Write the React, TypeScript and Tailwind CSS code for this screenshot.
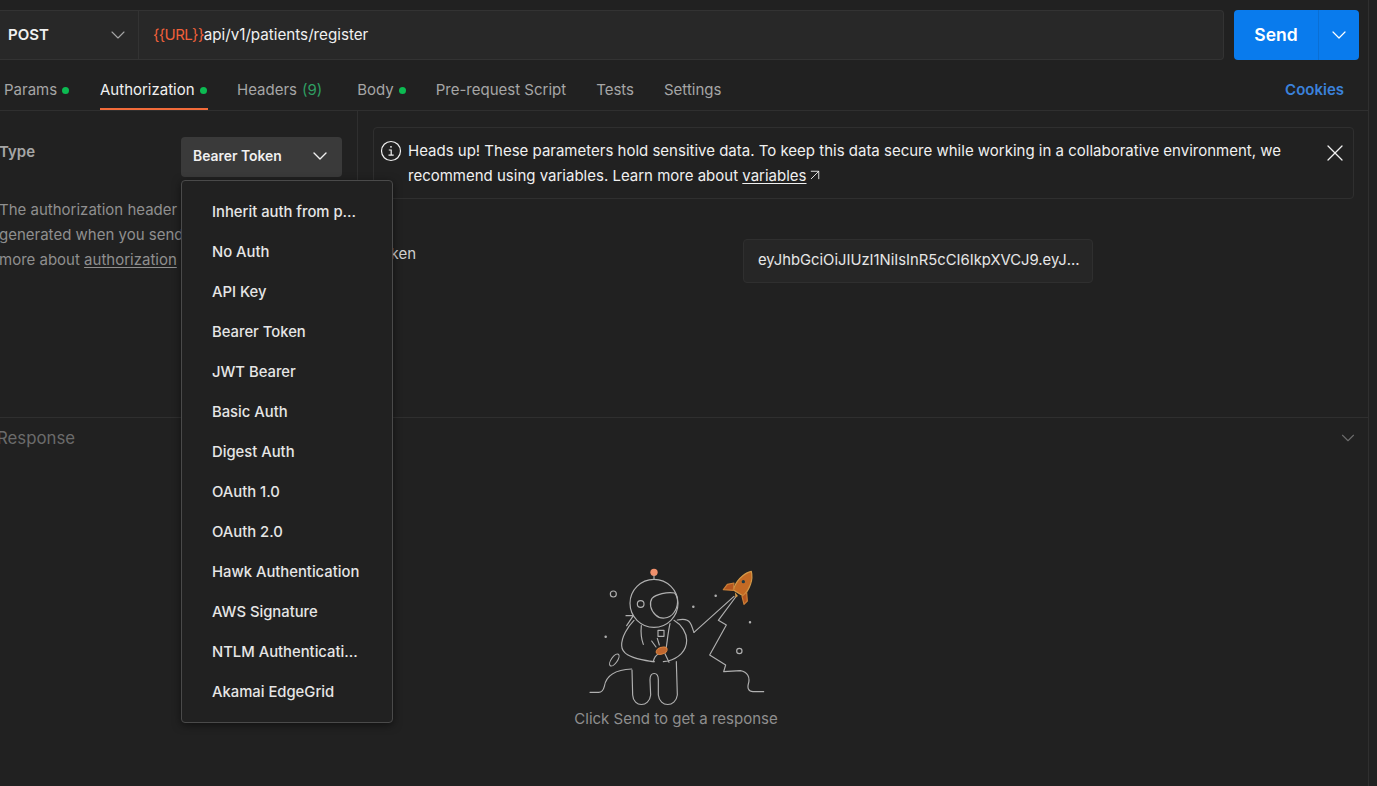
import { ChevronDown, X, ArrowUpRight } from "lucide-react";

const authTypes = [
  "Inherit auth from p...",
  "No Auth",
  "API Key",
  "Bearer Token",
  "JWT Bearer",
  "Basic Auth",
  "Digest Auth",
  "OAuth 1.0",
  "OAuth 2.0",
  "Hawk Authentication",
  "AWS Signature",
  "NTLM Authenticati...",
  "Akamai EdgeGrid",
];

function Dot() {
  return <span className="ml-[5px] h-[7px] w-[7px] rounded-full bg-[#0cbb52]" />;
}

function Tab({ label, dot, active, className }: { label: string; dot?: boolean; active?: boolean; className: string }) {
  return (
    <div className={`flex h-full items-center pt-[12px] ${active ? "border-b-2 border-[#f26b3a] text-[#f0f0f0]" : "border-b-2 border-transparent text-[#a6a6a6]"} ${className}`}>
      {label}
      {dot && <Dot />}
    </div>
  );
}

function InfoIcon() {
  return (
    <svg width="22" height="22" viewBox="0 0 22 22" fill="none" stroke="currentColor" strokeWidth="1.2" className="mt-[2px] shrink-0">
      <circle cx="11" cy="11" r="9.5" />
      <circle cx="11" cy="6.8" r="0.9" fill="currentColor" stroke="none" />
      <path d="M8.8 10h2.4v5.2M8.5 15.2h5.2" />
    </svg>
  );
}

function Astronaut() {
  return (
    <svg width="210" height="155" viewBox="0 0 630 465" fill="none" stroke="#b0b0b0" strokeWidth="3.5" strokeLinecap="round" strokeLinejoin="round" className="block">
      <circle cx="252" cy="52" r="11" fill="#f0906c" stroke="none" />
      <path d="M252 62v10" />
      <circle cx="252" cy="145" r="72" />
      <path d="M246 130c12-12 45-20 68-16 12 14 12 40-3 60-14 18-40 20-54 6-16-14-20-36-11-50z" />
      <circle cx="212" cy="147" r="10" />
      <circle cx="130" cy="117" r="9" />
      <circle cx="508" cy="288" r="8" />
      <path d="M192 196c-18 18-38 50-37 76 1 24 26 34 60 42 14 3 28 6 38 6" />
      <path d="M168 182h22M190 182l-20 30" />
      <path d="M312 196c24 14 38 38 38 60 0 32-24 54-56 62l-14 2" />
      <path d="M322 195c18-4 32-2 38 8 6 8 8 20 12 29" />
      <path d="M214 212c-2 20 0 40 6 56M300 206c-6 26-8 52-12 76" />
      <rect x="264" y="226" width="18" height="18" />
      <path d="M245 258l13 18M262 250l6 20" />
      <path d="M285 296l12 26M250 320c2-12 8-20 16-24" />
      <path d="M186 345l2 75c2 38 50 38 54 0l-2-45c0-26 25-26 25 0v45c4 38 52 38 57 0l-3-100" />
      <path d="M60 412h26c10 0 14-6 17-18 5-30 28-50 82-52" />
      <ellipse cx="133" cy="315" rx="9" ry="21" transform="rotate(35 133 315)" />
      <path d="M372 232l120-108" />
      <path d="M497 126l-52 70 24 14-50 90 48 30-6 20 50-3c22 4 30 20 24 40-3 12 0 23 14 23h32" />
      <circle cx="437" cy="122" r="2" fill="#b0b0b0" />
      <circle cx="370" cy="155" r="2" fill="#b0b0b0" />
      <circle cx="540" cy="202" r="2" fill="#b0b0b0" />
      <circle cx="107" cy="245" r="2" fill="#b0b0b0" />
      <ellipse cx="275" cy="287" rx="17" ry="10" transform="rotate(-20 275 287)" fill="#c0672f" stroke="#d9823f" />
      <path d="M490 105c6-24 28-50 54-56 6 24-4 54-24 74z" fill="#c46a24" stroke="#d49a4a" />
      <path d="M492 84l-20 4-12 16 30 2z" fill="#b5561f" stroke="#cc8038" />
      <path d="M530 112l2 26-10 10-6-24z" fill="#b5561f" stroke="#cc8038" />
      <path d="M495 112l9 11-8 5z" fill="#d49a4a" stroke="none" />
      <circle cx="520" cy="80" r="5" fill="#1f3a44" stroke="none" />
    </svg>
  );
}

export default function App() {
  return (
    <div className="relative h-[786px] w-[1377px] overflow-hidden bg-[#212121] font-['Inter',sans-serif] text-[15px]">
      <div className="flex h-full w-[1369px] flex-col border-r border-[#2f2f2f]">
        {/* request bar */}
        <div className="flex h-[60px] gap-[10px] pt-[10px] pr-[9px]">
          <div className="flex flex-1 rounded-r-[4px] border-y border-r border-[#333333] bg-[#282828]">
            <div className="flex w-[139px] items-center justify-between border-r border-[#333333] pl-[8px] pr-[8px]">
              <span className="pt-[1px] font-semibold text-[#f0f0f0]">POST</span>
              <ChevronDown size={24} className="text-[#a6a6a6]" strokeWidth={1.1} />
            </div>
            <div className="flex items-center pl-[14px] text-[15.2px] text-[#f0f0f0]">
              <span className="text-[15px] tracking-[-0.6px] text-[#f0603a]">{"{{URL}}"}</span>
              api/v1/patients/register
            </div>
          </div>
          <div className="flex w-[125px] rounded-[4px] bg-[#097bed] text-white">
            <div className="flex w-[84px] items-center justify-center text-[17.5px] font-semibold">Send</div>
            <div className="flex flex-1 items-center justify-center border-l border-[#0a6fd4]">
              <ChevronDown size={24} strokeWidth={1.2} />
            </div>
          </div>
        </div>

        {/* tabs */}
        <div className="flex h-[51px] items-center justify-between border-b border-[#2f2f2f] pl-[4px] pr-[24px]">
          <div className="flex h-full">
            <Tab label="Params" dot className="w-[96px]" />
            <Tab label="Authorization" dot active className="w-[108px]" />
            <div className="ml-[29px] flex items-center border-b-2 border-transparent pt-[12px] text-[#a6a6a6]">
              Headers <span className="ml-[5px] text-[#2f9e62]">(9)</span>
            </div>
            <Tab label="Body" dot className="ml-[35px]" />
            <Tab label="Pre-request Script" className="ml-[30px]" />
            <Tab label="Tests" className="ml-[30px]" />
            <Tab label="Settings" className="ml-[30px]" />
          </div>
          <span className="pt-[10px] font-semibold text-[#3b82dc]">Cookies</span>
        </div>

        {/* auth pane */}
        <div className="flex h-[307px] border-b border-[#2f2f2f]">
          <div className="w-[358px] border-r border-[#2f2f2f]">
            <div className="flex items-start">
              <span className="mt-[30px] -ml-[1px] w-[182px] font-semibold text-[#a6a6a6]">Type</span>
              <div className="mt-[26px] flex h-[40px] w-[161px] items-center justify-between rounded-[4px] bg-[#3a3a3a] pb-[2px] pl-[12px] pr-[10px] text-[13.9px] font-semibold text-[#f0f0f0]">
                Bearer Token
                <ChevronDown size={24} strokeWidth={1.4} />
              </div>
            </div>
            <p className="mt-[20px] -ml-[1px] whitespace-nowrap leading-[25px] text-[#8f8f8f]">
              The authorization header
              <br />
              generated when you send
              <br />
              more about <span className="underline underline-offset-2">authorization</span>
            </p>
          </div>
          <div className="flex-1 pl-[15px] pr-[14px] pt-[16px]">
            <div className="flex h-[72px] items-start rounded-[4px] border border-[#2f2f2f] pl-[6px] pr-[4px] pt-[10px] leading-[25px] text-[#f0f0f0]">
              <InfoIcon />
              <p className="ml-[6px] flex-1">
                Heads up! These parameters hold sensitive data. To keep this data secure while working in a collaborative environment, we
                <br />
                recommend using variables. Learn more about <span className="underline underline-offset-2">variables</span>
                <ArrowUpRight size={18} strokeWidth={1.2} className="ml-[-1px] inline align-[-3px]" />
              </p>
              <X size={28} strokeWidth={1.1} className="mt-[1px] shrink-0" />
            </div>
            <div className="mt-[40px] flex items-start">
              <span className="mt-[4px] w-[370px] text-[#d0d0d0]">Token</span>
              <div className="flex h-[44px] w-[350px] items-center rounded-[4px] border border-[#2f2f2f] bg-[#262626] pb-[2px] pl-[14px] pr-[12px] text-[14.8px] text-[#e6e6e6]">
                <span className="truncate">eyJhbGciOiJIUzI1NiIsInR5cCI6IkpXVCJ9.eyJzdWIiOiIxMjM0NTY3ODkwIn0</span>
              </div>
            </div>
          </div>
        </div>

        {/* response */}
        <div className="flex flex-1 flex-col">
          <div className="flex h-[40px] items-center justify-between pr-[9px]">
            <span className="-ml-[3px] pt-[1px] text-[16.8px] text-[#6b6b6b]">Response</span>
            <ChevronDown size={22} strokeWidth={1.2} className="text-[#6b6b6b]" />
          </div>
          <div className="ml-[500px] mt-[97px] flex w-[352px] flex-col items-center">
            <div className="-ml-[2px] w-[210px]">
              <Astronaut />
            </div>
            <span className="-mt-[2px] text-[#8f8f8f]">Click Send to get a response</span>
          </div>
        </div>
      </div>

      {/* auth type menu */}
      <div className="absolute left-[181px] top-[180px] w-[212px] rounded-[4px] border border-[#4a4a4a] bg-[#212121] pb-[10px] pt-[11px] shadow-[0_2px_8px_rgba(0,0,0,0.5)]">
        {authTypes.map((t) => (
          <div key={t} className="flex h-[40px] items-center pl-[30px] pt-[1px] text-[14.8px] font-medium text-[#e6e6e6]">
            {t}
          </div>
        ))}
      </div>
    </div>
  );
}
